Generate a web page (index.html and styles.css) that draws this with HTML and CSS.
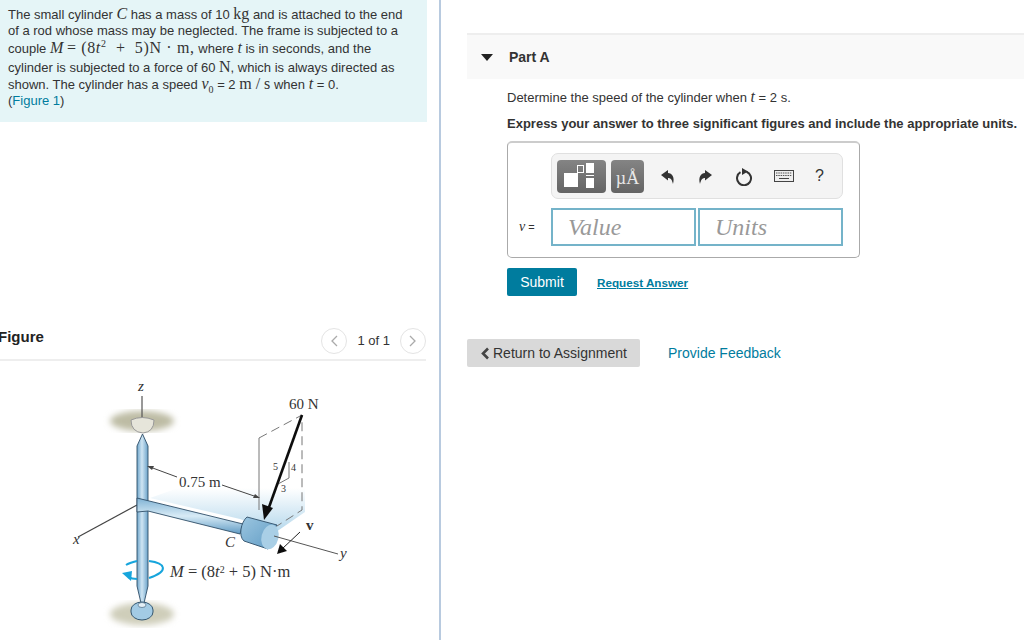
FILE: index.html
```html
<!DOCTYPE html>
<html lang="en">
<head>
  <meta charset="UTF-8">
  <title>Part A</title>
  <link rel="stylesheet" href="styles.css">
</head>
<body>
  <div class="main-container">

    <!-- Left pane: problem text and figure -->
    <div class="left-pane">
      <div class="intro">
        <div class="line">The small cylinder <span class="math big">C</span> has a mass of 10 <span class="roman big">kg</span> and is attached to the end</div>
        <div class="line">of a rod whose mass may be neglected. The frame is subjected to a</div>
        <div class="line line-tall">couple <span class="math big">M</span> <span class="roman big spaced">= (8<i>t</i><sup>2</sup> &nbsp;+ &nbsp;5)N · m,</span> where <span class="math big">t</span> is in seconds, and the</div>
        <div class="line">cylinder is subjected to a force of 60 <span class="roman big">N</span>, which is always directed as</div>
        <div class="line">shown. The cylinder has a speed <span class="math big">v</span><sub class="roman">0</sub> = 2 <span class="roman big">m / s</span> when <span class="math big">t</span> = 0.</div>
        <div class="line">(<a href="#">Figure 1</a>)</div>
      </div>

      <div class="figure-head">
        <h2>Figure</h2>
        <div class="pager">
          <span class="round-btn"><svg width="8" height="12" viewBox="0 0 8 12"><path d="M7 1 2 6l5 5" fill="none" stroke="#aaa" stroke-width="1.3"/></svg></span>
          <span class="pager-text">1 of 1</span>
          <span class="round-btn"><svg width="8" height="12" viewBox="0 0 8 12"><path d="M1 1l5 5-5 5" fill="none" stroke="#aaa" stroke-width="1.3"/></svg></span>
        </div>
      </div>

      <svg class="diagram" width="427" height="279" viewBox="0 361 427 279">
        <defs>
          <linearGradient id="plane" x1="0" y1="0" x2="0" y2="1">
            <stop offset="0" stop-color="#ffffff"/>
            <stop offset="1" stop-color="#b5d8ec"/>
          </linearGradient>
          <linearGradient id="post" x1="0" y1="0" x2="1" y2="0">
            <stop offset="0" stop-color="#6fa6cc"/>
            <stop offset="0.45" stop-color="#cfe5f3"/>
            <stop offset="1" stop-color="#6aa2c9"/>
          </linearGradient>
          <linearGradient id="rod" x1="0" y1="0" x2="0" y2="1">
            <stop offset="0" stop-color="#7fb2d4"/>
            <stop offset="0.5" stop-color="#d8ebf6"/>
            <stop offset="1" stop-color="#5f9ac4"/>
          </linearGradient>
          <linearGradient id="cyl" x1="0" y1="0" x2="1" y2="1">
            <stop offset="0" stop-color="#9cc6e0"/>
            <stop offset="1" stop-color="#5f9bc4"/>
          </linearGradient>
          <filter id="soft"><feGaussianBlur stdDeviation="3"/></filter>
          <filter id="tiny"><feGaussianBlur stdDeviation="0.35"/></filter>
        </defs>

        <ellipse cx="142" cy="421" rx="32" ry="10" fill="#bdbca4" filter="url(#soft)"/>
        <ellipse cx="142" cy="614" rx="32" ry="11" fill="#cfceba" filter="url(#soft)"/>
        <path d="M178 488H305V512L276 532 240 519 150 498Z" fill="url(#plane)"/>

        <g filter="url(#tiny)">
          <path d="M142 396V420" stroke="#555" stroke-width="1.2"/>
          <path d="M131 420Q142 415 154 420Q154 432 143 433Q131 432 131 420Z" fill="#e6e5da" stroke="#999"/>
          <path d="M137 505 78 537" stroke="#444" stroke-width="1.2"/>

          <path d="M137 446 142.500 434 148 446V586L144 603H141L137 586Z" fill="url(#post)" stroke="#2f4e68" stroke-width="0.9"/>
          <path d="M131 610a11 8 0 0 1 22 0v2a11 8 0 0 1-22 0Z" fill="#a3cbe4" stroke="#34566f"/>
          <ellipse cx="142" cy="605" rx="4" ry="2.500" fill="#e4f0f7" stroke="#34566f" stroke-width="0.6"/>

          <path d="M137 498 243 524 240 534 148 511 137 512Z" fill="url(#rod)" stroke="#2f4e68" stroke-width="0.9"/>

          <path d="M259 510V438" stroke="#777" stroke-width="1"/>
          <path d="M259 438 302 415V510L277 526" fill="none" stroke="#777" stroke-width="1" stroke-dasharray="9 5"/>
          <path d="M289 462V478L278 484" fill="none" stroke="#777" stroke-width="1"/>

          <path d="M302 415 268 510" stroke="#111" stroke-width="2.600"/>
          <path d="M264 520 262 504 273 508Z" fill="#111"/>

          <path d="M177 477 150 467" stroke="#444" stroke-width="1"/>
          <path d="M147 466 154 466 152 470Z" fill="#444"/>
          <path d="M222 485 257 497" stroke="#444" stroke-width="1"/>
          <path d="M260 498 253 498 255 494Z" fill="#444"/>

          <path d="M247 517 277 525C270 534 270 542 268 549L244 541C238 536 241 522 247 517Z" fill="url(#cyl)" stroke="#2f4e68" stroke-width="0.9"/>
          <ellipse cx="270" cy="537" rx="8.500" ry="12.500" transform="rotate(14 270 537)" fill="#a9cfe6"/>
          <path d="M274 536 338 554" stroke="#555" stroke-width="1"/>
          <path d="M300 532 282 549" stroke="#222" stroke-width="1"/>
          <path d="M277 554 280 544 287 551Z" fill="#111"/>

          <path d="M126 565C129 563 133 562 137 561M149 561C165 563 170 571 149 578M137 579C133 579 130 578 128 577" fill="none" stroke="#19a5dc" stroke-width="2"/>
          <path d="M122 573 132 571 131 581Z" fill="#19a5dc"/>
        </g>

        <g class="fig-text">
          <text x="138" y="391" class="fig-italic">z</text>
          <text x="289" y="409">60 N</text>
          <text x="179" y="487">0.75 m</text>
          <text x="273" y="470" class="fig-small">5</text>
          <text x="291" y="471" class="fig-small">4</text>
          <text x="281" y="492" class="fig-small">3</text>
          <text x="225" y="547" class="fig-italic">C</text>
          <text x="306" y="530" class="fig-bold">v</text>
          <text x="340" y="558" class="fig-italic">y</text>
          <text x="73" y="544" class="fig-italic">x</text>
          <text x="170" y="577" class="fig-formula"><tspan class="fig-italic">M</tspan> = (8<tspan class="fig-italic">t</tspan><tspan class="fig-sup" dy="-4">2</tspan><tspan dy="4"> + 5) N·m</tspan></text>
        </g>
      </svg>
    </div>

    <!-- Right pane: Part A -->
    <div class="right-pane">
      <div class="part-head">
        <svg class="caret" width="12" height="7" viewBox="0 0 12 7"><path d="M0 0h12L6 7Z" fill="#222"/></svg>
        <h3>Part A</h3>
      </div>

      <div class="part-body">
        <p class="question">Determine the speed of the cylinder when <span class="math big">t</span> = 2 s.</p>
        <p class="instructions">Express your answer to three significant figures and include the appropriate units.</p>

        <div class="answer-box">
          <div class="toolbar">
            <span class="tool-btn tool-templates">
              <svg width="49" height="33" viewBox="0 0 49 33">
                <rect x="7" y="13" width="14" height="14" fill="#fff"/>
                <rect x="20.500" y="5.500" width="6" height="7" fill="none" stroke="#fff"/>
                <rect x="29" y="3" width="8" height="10" fill="#fff"/>
                <rect x="29" y="15" width="8" height="1" fill="#fff"/>
                <rect x="29" y="18" width="8" height="10" fill="#fff"/>
              </svg>
            </span>
            <span class="tool-btn tool-units">µÅ</span>
            <span class="tool-icons">
              <svg width="16" height="17" viewBox="0 0 16 17"><path d="M1 7 8 2V5C12 5 15 9 13 16 12 12 11 10 8 10V12.500Z" fill="#333"/></svg>
              <svg width="16" height="17" viewBox="0 0 16 17"><path d="M15 7 8 2V5C4 5 1 9 3 16 4 12 5 10 8 10V12.500Z" fill="#333"/></svg>
              <svg width="18" height="19" viewBox="0 0 18 19"><path d="M5.500 5.200a7 7 0 1 0 6 -.5" fill="none" stroke="#333" stroke-width="2"/><path d="M7 1 13 4.500 7 8Z" fill="#333"/></svg>
              <svg width="20" height="12" viewBox="0 0 20 12"><rect x="0.500" y="0.500" width="19" height="11" fill="#eee" stroke="#444"/><path d="M2 3h16M2 5.500h16" stroke="#555" stroke-dasharray="1.500 .8"/><path d="M5 8.500h10" stroke="#444"/></svg>
              <span class="help">?</span>
            </span>
          </div>
          <div class="input-row">
            <span class="input-label"><span class="math">v</span> =</span>
            <input class="answer-input" placeholder="Value">
            <input class="answer-input" placeholder="Units">
          </div>
        </div>

        <div class="actions">
          <button class="submit">Submit</button>
          <a href="#" class="request">Request Answer</a>
        </div>
      </div>

      <div class="footer-links">
        <button class="return"><svg width="10" height="13" viewBox="0 0 10 13"><path d="M8 1.500 3 6.500l5 5" fill="none" stroke="#444" stroke-width="2.600"/></svg>Return to Assignment</button>
        <a href="#" class="feedback">Provide Feedback</a>
      </div>
    </div>

  </div>
</body>
</html>
```
FILE: styles.css
```css
body {
  font-family: "Liberation Sans", Arial, sans-serif;
  color: #333;
  background: white;
  margin: 0;
  height: 640px;
  overflow: hidden;
}

.main-container {
  display: flex;
  height: 640px;
}

.left-pane {
  width: 439px;
  flex-shrink: 0;
  border-right: 2px solid #b8cadf;
  overflow: hidden;
}

.intro {
  width: 427px;
  height: 122px;
  box-sizing: border-box;
  padding: 5px 8px 0;
  background: #e5f5f7;
  font-size: 13px;
}

.line {
  height: 17px;
  line-height: 17px;
  white-space: nowrap;
}

.line-tall {
  height: 19px;
}

.math {
  font-family: "Liberation Serif", serif;
  font-style: italic;
}

.roman {
  font-family: "Liberation Serif", serif;
}

.big {
  font-size: 16px;
}

.spaced {
  letter-spacing: 0.650px;
}

sup, sub {
  font-size: 10px;
  line-height: 0;
}

a {
  color: #007c9e;
  text-decoration: none;
}

.figure-head {
  display: flex;
  justify-content: space-between;
  height: 35px;
  width: 426px;
  margin-top: 201px;
  border-bottom: 2px solid #eee;
  padding-bottom: 1px;
}

.figure-head h2 {
  margin: 5px 0 0 -2px;
  font-size: 15px;
  color: #222;
}

.pager {
  display: flex;
  align-items: center;
  gap: 10px;
  font-size: 13px;
}

.round-btn {
  display: flex;
  align-items: center;
  justify-content: center;
  width: 26px;
  height: 26px;
  box-sizing: border-box;
  border: 1px solid #e4e4e4;
  border-radius: 50%;
}

.diagram {
  display: block;
}

.fig-text {
  font-family: "Liberation Serif", serif;
  font-size: 15px;
  fill: #333;
}

.fig-formula {
  font-size: 16.500px;
}

.fig-italic {
  font-style: italic;
}

.fig-bold {
  font-weight: bold;
}

.fig-small {
  font-size: 10px;
}

.fig-sup {
  font-size: 10px;
}

.right-pane {
  flex-grow: 1;
  padding: 33px 0 0 26px;
  font-size: 13px;
}

.part-head {
  display: flex;
  align-items: center;
  height: 44px;
  background: #f9f9f9;
  border-top: 2px solid #eee;
  padding-left: 14px;
}

.part-head h3 {
  margin: 0 0 0 16px;
  font-size: 14px;
  color: #333;
}

.part-body {
  padding-left: 40px;
}

.question {
  margin: 9px 0 0;
  line-height: 17px;
}

.instructions {
  margin: 9px 0 0;
  line-height: 17px;
  font-weight: bold;
  white-space: nowrap;
}

.answer-box {
  width: 353px;
  height: 117px;
  box-sizing: border-box;
  margin-top: 9px;
  padding: 10px 16px 0 43px;
  border: 1px solid #aaa;
  border-top: 2px solid #ccc;
  border-radius: 5px;
}

.toolbar {
  display: flex;
  align-items: center;
  height: 46px;
  box-sizing: border-box;
  padding-left: 5px;
  background: #f4f4f4;
  border: 1px solid #e0e0e0;
  border-radius: 7px;
}

.tool-btn {
  display: block;
  height: 33px;
  border-radius: 4px;
  background: linear-gradient(#848484, #646464);
}

.tool-templates {
  width: 49px;
}

.tool-units {
  width: 33px;
  margin-left: 5px;
  font-family: "Liberation Serif", serif;
  font-size: 18px;
  line-height: 36px;
  text-align: center;
  color: #e8e8e8;
}

.tool-icons {
  display: flex;
  align-items: center;
  justify-content: space-between;
  width: 164px;
  margin-left: 16px;
}

.help {
  font-size: 16px;
  color: #333;
}

.input-row {
  display: flex;
  align-items: center;
  gap: 2px;
  margin-top: 9px;
  margin-left: -32px;
}

.input-label {
  width: 30px;
  font-size: 11px;
  white-space: nowrap;
}

.input-label .math {
  font-size: 14px;
}

.answer-input {
  width: 145px;
  height: 38px;
  box-sizing: border-box;
  padding: 0 15px;
  border: 2px solid #74b3c9;
  border-radius: 0;
  outline: none;
  font-family: "Liberation Serif", serif;
  font-size: 24px;
  font-style: italic;
}

.answer-input::placeholder {
  color: #999;
  opacity: 1;
}

.actions {
  display: flex;
  align-items: center;
  margin-top: 10px;
}

.submit {
  width: 70px;
  height: 28px;
  background: #007c9e;
  color: white;
  border: none;
  border-radius: 2px;
  font-family: inherit;
  font-size: 14px;
}

.request {
  margin-left: 20px;
  font-size: 11.700px;
  font-weight: bold;
  text-decoration: underline;
}

.footer-links {
  display: flex;
  align-items: center;
  margin-top: 43px;
}

.return {
  display: flex;
  align-items: center;
  gap: 3px;
  width: 173px;
  height: 28px;
  padding: 0 0 0 13px;
  background: #d9d9d9;
  color: #333;
  border: none;
  border-radius: 2px;
  font-family: inherit;
  font-size: 14px;
}

.feedback {
  margin-left: 28px;
  font-size: 14px;
}
```
